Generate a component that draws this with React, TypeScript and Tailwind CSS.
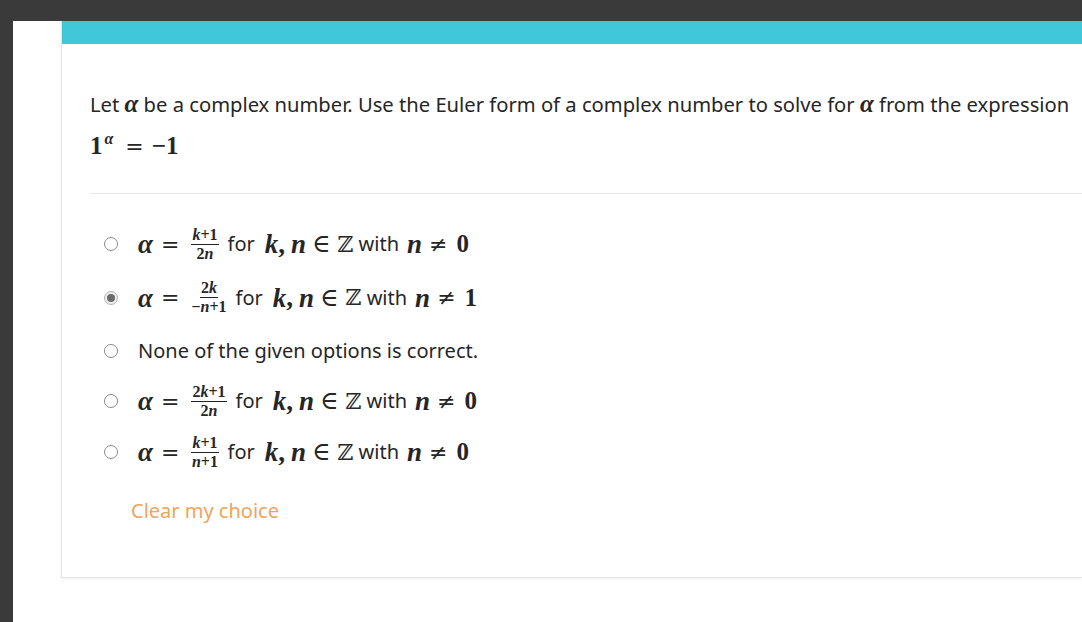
import React from 'react';

const sans = { fontFamily: '"Noto Sans", "Open Sans", sans-serif' };
const serif = { fontFamily: '"Liberation Serif", serif' };
const dejavu = { fontFamily: '"DejaVu Serif", serif' };

function V({ children }: { children: React.ReactNode }) {
  return (
    <span className="font-bold italic" style={serif}>
      {children}
    </span>
  );
}

function Frac({ num, den }: { num: React.ReactNode; den: React.ReactNode }) {
  return (
    <span
      className="ml-[12px] inline-flex flex-col items-center text-[16px] leading-[16px] font-bold"
      style={serif}
    >
      <span className="border-b-[1.5px] border-[#222] px-[1px] pb-[1px]">{num}</span>
      <span className="pt-[1px]">{den}</span>
    </span>
  );
}

function Radio({ checked }: { checked?: boolean }) {
  return (
    <span
      className={`flex h-[14px] w-[14px] shrink-0 items-center justify-center rounded-full border ${
        checked ? 'border-[#b5b5b5] bg-[#eeeeee]' : 'border-[#8a8a8a] bg-white'
      }`}
    >
      {checked ? <span className="h-[8px] w-[8px] rounded-full bg-[#6b6b6b]" /> : null}
    </span>
  );
}

function Tail({ last }: { last: string }) {
  return (
    <>
      <span className="ml-[9px]">for</span>
      <span className="ml-[10px] text-[27px]">
        <V>k</V>
      </span>
      <span className="text-[27px] font-bold" style={serif}>,</span>
      <span className="ml-[6px] text-[27px]">
        <V>n</V>
      </span>
      <span className="ml-[6px] text-[25px]" style={dejavu}>∈</span>
      <span className="ml-[7px] text-[22px]" style={dejavu}>ℤ</span>
      <span className="ml-[5px]">with</span>
      <span className="ml-[8px] text-[27px]">
        <V>n</V>
      </span>
      <span className="ml-[7px] text-[22px]" style={dejavu}>≠</span>
      <span className="ml-[9px] text-[25px] font-bold" style={serif}>{last}</span>
    </>
  );
}

function Alpha() {
  return (
    <>
      <span className="text-[27px]">
        <V>α</V>
      </span>
      <span className="ml-[8px] text-[22px]" style={dejavu}>=</span>
    </>
  );
}

export default function App() {
  const options: { checked?: boolean; body: React.ReactNode; h: string }[] = [
    {
      h: 'h-[52px]',
      body: (
        <>
          <Alpha />
          <Frac num={<><V>k</V>+1</>} den={<>2<V>n</V></>} />
          <Tail last="0" />
        </>
      ),
    },
    {
      checked: true,
      h: 'h-[55px]',
      body: (
        <>
          <Alpha />
          <Frac num={<>2<V>k</V></>} den={<>−<V>n</V>+1</>} />
          <Tail last="1" />
        </>
      ),
    },
    { h: 'h-[51px]', body: <span>None of the given options is correct.</span> },
    {
      h: 'h-[50px]',
      body: (
        <>
          <Alpha />
          <Frac num={<>2<V>k</V>+1</>} den={<>2<V>n</V></>} />
          <Tail last="0" />
        </>
      ),
    },
    {
      h: 'h-[52px]',
      body: (
        <>
          <Alpha />
          <Frac num={<><V>k</V>+1</>} den={<><V>n</V>+1</>} />
          <Tail last="0" />
        </>
      ),
    },
  ];

  return (
    <div className="h-[622px] overflow-hidden bg-[#3a3a3a] pl-[13px] pt-[21px]" style={sans}>
      <div className="h-full bg-white pl-[48px]">
        <div className="border-b border-l border-[#e4e4e4] shadow-[0_1px_3px_rgba(0,0,0,0.06)]">
          <div className="h-[23px] bg-[#40c8d8]" />
          <div className="pb-[51px] pl-[28px] pt-[41px] text-[#262626]">
            <p className="whitespace-nowrap text-[20.2px] leading-[34px]">
              Let <span className="text-[25px]"><V>α</V></span> be a complex number. Use the Euler form of a complex number to solve for{' '}
              <span className="text-[25px]"><V>α</V></span> from the expression
            </p>
            <p className="mt-[8px] flex items-baseline leading-[34px]">
              <span className="text-[25px] font-bold" style={serif}>1</span>
              <span className="relative -top-[10px] ml-[2px] text-[16px]"><V>α</V></span>
              <span className="ml-[12px] text-[22px]" style={dejavu}>=</span>
              <span className="ml-[8px] text-[25px] font-bold" style={serif}>−1</span>
            </p>
            <div className="mt-[27px] border-t border-[#e8e8e8]" />
            <div className="pl-[14px] pt-[24px]">
              {options.map((o, i) => (
                <div key={i} className={`flex items-center ${o.h} text-[20px] text-[#262626]`}>
                  <Radio checked={o.checked} />
                  <div className="ml-[20px] flex items-center whitespace-nowrap">{o.body}</div>
                </div>
              ))}
              <div className="mt-[18px] pl-[27px] text-[20px] text-[#f0a45c]">Clear my choice</div>
            </div>
          </div>
        </div>
      </div>
    </div>
  );
}
